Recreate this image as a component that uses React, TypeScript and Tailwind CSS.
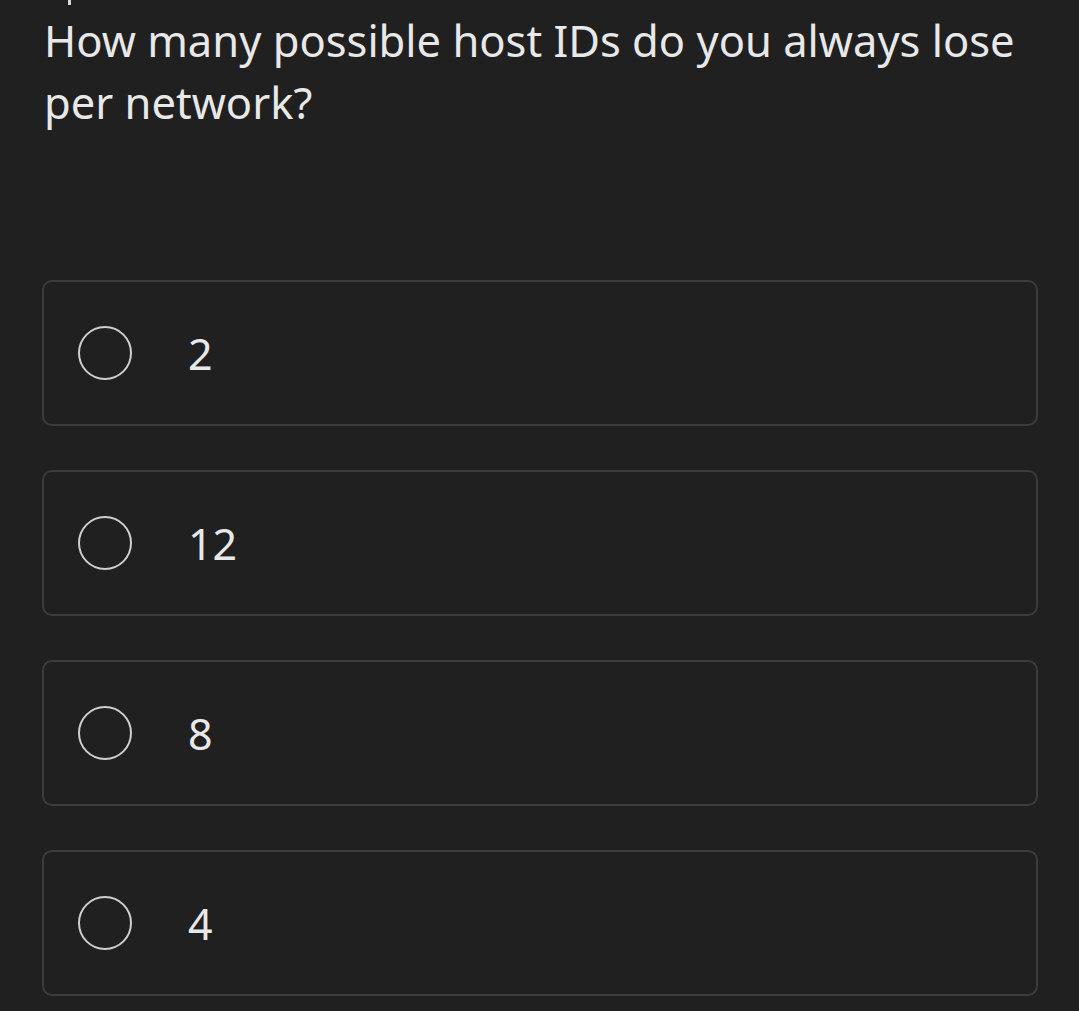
const options = ["2", "12", "8", "4"];

export default function App() {
  return (
    <div className="min-h-screen bg-[#202020] pl-[42px] pr-[41px] font-['Noto_Sans',sans-serif] text-[#e8e8e8]">
      <div className="ml-[26px] h-[5px] w-[3px] bg-[#d8d8d8]" />
      <h1 className="mt-[4px] max-w-[990px] pl-[2px] text-[43.5px] font-normal leading-[62px]">
        How many possible host IDs do you always lose per network?
      </h1>

      <div className="mt-[147px] flex flex-col gap-[44px]">
        {options.map((option) => (
          <button
            key={option}
            type="button"
            className="flex h-[146px] w-full items-center rounded-[10px] border-2 border-[#3c3c3c] pl-[34px] text-left"
          >
            <span className="size-[54px] shrink-0 rounded-full border-2 border-[#cfcfcf]" />
            <span className="ml-[56px] text-[43px] leading-none">{option}</span>
          </button>
        ))}
      </div>
    </div>
  );
}
